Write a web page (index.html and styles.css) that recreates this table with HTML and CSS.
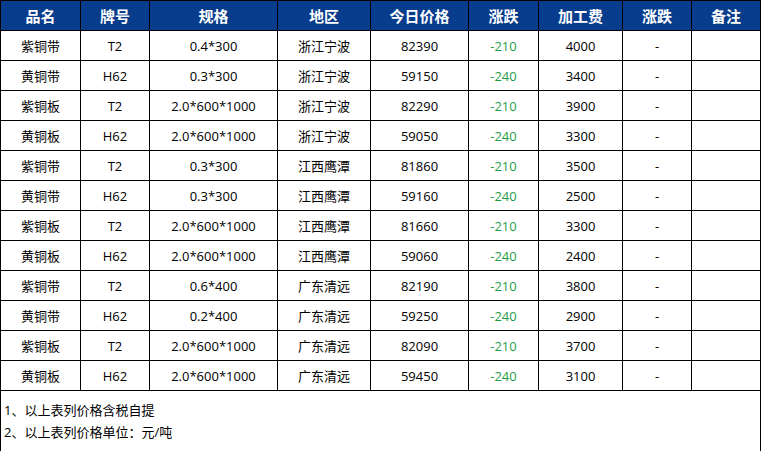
FILE: index.html
```html
<!DOCTYPE html>
<html lang="zh">
<head>
<meta charset="utf-8">
<link rel="stylesheet" href="styles.css">
</head>
<body>
<table class="price-table">
  <colgroup>
    <col class="c1"><col class="c2"><col class="c3"><col class="c4"><col class="c5"><col class="c6"><col class="c7"><col class="c8"><col class="c9">
  </colgroup>
  <thead>
    <tr><th>品名</th><th>牌号</th><th>规格</th><th>地区</th><th>今日价格</th><th>涨跌</th><th>加工费</th><th>涨跌</th><th>备注</th></tr>
  </thead>
  <tbody>
    <tr><td>紫铜带</td><td>T2</td><td>0.4*300</td><td>浙江宁波</td><td>82390</td><td class="down">-210</td><td>4000</td><td>-</td><td></td></tr>
    <tr><td>黄铜带</td><td>H62</td><td>0.3*300</td><td>浙江宁波</td><td>59150</td><td class="down">-240</td><td>3400</td><td>-</td><td></td></tr>
    <tr><td>紫铜板</td><td>T2</td><td>2.0*600*1000</td><td>浙江宁波</td><td>82290</td><td class="down">-210</td><td>3900</td><td>-</td><td></td></tr>
    <tr><td>黄铜板</td><td>H62</td><td>2.0*600*1000</td><td>浙江宁波</td><td>59050</td><td class="down">-240</td><td>3300</td><td>-</td><td></td></tr>
    <tr><td>紫铜带</td><td>T2</td><td>0.3*300</td><td>江西鹰潭</td><td>81860</td><td class="down">-210</td><td>3500</td><td>-</td><td></td></tr>
    <tr><td>黄铜带</td><td>H62</td><td>0.3*300</td><td>江西鹰潭</td><td>59160</td><td class="down">-240</td><td>2500</td><td>-</td><td></td></tr>
    <tr><td>紫铜板</td><td>T2</td><td>2.0*600*1000</td><td>江西鹰潭</td><td>81660</td><td class="down">-210</td><td>3300</td><td>-</td><td></td></tr>
    <tr><td>黄铜板</td><td>H62</td><td>2.0*600*1000</td><td>江西鹰潭</td><td>59060</td><td class="down">-240</td><td>2400</td><td>-</td><td></td></tr>
    <tr><td>紫铜带</td><td>T2</td><td>0.6*400</td><td>广东清远</td><td>82190</td><td class="down">-210</td><td>3800</td><td>-</td><td></td></tr>
    <tr><td>黄铜带</td><td>H62</td><td>0.2*400</td><td>广东清远</td><td>59250</td><td class="down">-240</td><td>2900</td><td>-</td><td></td></tr>
    <tr><td>紫铜板</td><td>T2</td><td>2.0*600*1000</td><td>广东清远</td><td>82090</td><td class="down">-210</td><td>3700</td><td>-</td><td></td></tr>
    <tr><td>黄铜板</td><td>H62</td><td>2.0*600*1000</td><td>广东清远</td><td>59450</td><td class="down">-240</td><td>3100</td><td>-</td><td></td></tr>
    <tr class="notes"><td colspan="9"><p>1、以上表列价格含税自提</p><p>2、以上表列价格单位：元/吨</p></td></tr>
  </tbody>
</table>
</body>
</html>
```
FILE: styles.css
```css
html, body {
  margin: 0;
  padding: 0;
  background: #fff;
}
.price-table {
  border-collapse: collapse;
  table-layout: fixed;
  width: 760px;
  font-family: "Open Sans", "Noto Sans CJK SC", sans-serif;
  font-size: 13px;
  color: #000;
}
.c1 { width: 80px; }
.c2 { width: 69px; }
.c3 { width: 128px; }
.c4 { width: 93px; }
.c5 { width: 98px; }
.c6 { width: 70px; }
.c7 { width: 84px; }
.c8 { width: 69px; }
.c9 { width: 69px; }
.price-table th,
.price-table td {
  border: 1px solid #000;
  height: 29px;
  padding: 0;
  text-align: center;
  vertical-align: middle;
  line-height: 18px;
}
.price-table th {
  background: #083c8c;
  color: #fff;
  font-family: "Noto Sans CJK SC", sans-serif;
  font-weight: bold;
  font-size: 15px;
}
.price-table td.down {
  color: #1e9e48;
}
.notes td {
  height: 58px;
  text-align: left;
  vertical-align: top;
  padding: 8px 0 0 3px;
}
.notes p {
  margin: 0;
  line-height: 22px;
}
```
